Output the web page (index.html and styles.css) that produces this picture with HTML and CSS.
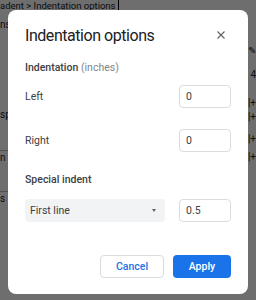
FILE: index.html
```html
<!DOCTYPE html>
<html lang="en">
    <head>
        <meta charset="utf-8" />
        <title>Indentation options</title>
        <link rel="stylesheet" href="styles.css">
    </head>

    <body>
        <div class="page">
            <div class="crumb">adent &gt; Indentation options<span class="caret"></span></div>
            <div class="sides">
                <div class="side left">
                    <div class="frag" style="height: 12px">ns</div>
                    <div class="frag gap" style="height: 78px"></div>
                    <div class="frag">sp</div>
                    <div class="frag rule" style="height: 28px"></div>
                    <div class="frag">n</div>
                    <div class="frag rule" style="height: 26px"></div>
                    <div class="frag">s</div>
                </div>
                <div class="side right">
                    <div class="frag" style="height: 26px"></div>
                    <div class="frag">&#9998;</div>
                    <div class="frag" style="height: 10px"></div>
                    <div class="frag">4</div>
                    <div class="frag" style="height: 14px"></div>
                    <div class="frag">|+</div>
                    <div class="frag">|+</div>
                    <div class="frag" style="height: 8px"></div>
                    <div class="frag">|+</div>
                    <div class="frag" style="height: 4px"></div>
                    <div class="frag">|+</div>
                </div>
            </div>
        </div>

        <div class="scrim">
            <div class="dialog">
                <div class="head">
                    <h2>Indentation options</h2>
                    <svg class="close" width="10" height="10" viewBox="0 0 10 10">
                        <path d="M1.5 1.5 L8.5 8.5 M8.5 1.5 L1.5 8.5" stroke="#5f6368" stroke-width="1.1" fill="none"/>
                    </svg>
                </div>

                <div class="section">Indentation <span class="unit">(inches)</span></div>

                <div class="row first">
                    <label for="left">Left</label>
                    <input class="num" id="left" type="text" value="0"/>
                </div>
                <div class="row">
                    <label for="right">Right</label>
                    <input class="num" id="right" type="text" value="0"/>
                </div>

                <div class="section special">Special indent</div>

                <div class="row pick">
                    <div class="select">
                        <span>First line</span>
                        <span class="arrow"></span>
                    </div>
                    <input class="num" id="special" type="text" value="0.5"/>
                </div>

                <div class="buttons">
                    <button class="btn cancel">Cancel</button>
                    <button class="btn apply">Apply</button>
                </div>
            </div>
        </div>
    </body>
</html>
```

FILE: styles.css
```css
body {
    margin: 0;
    width: 256px;
    height: 300px;
    overflow: hidden;
    position: relative;
    font-family: Roboto, Arial, sans-serif;
    background-color: #fff;
}
.page {
    color: #202124;
    font-size: 10px;
}
.crumb {
    height: 14px;
    line-height: 12px;
    font-size: 9.5px;
    display: flex;
    align-items: flex-start;
}
.caret {
    display: inline-block;
    width: 1px;
    height: 13px;
    margin-left: 2px;
    background-color: #000;
}
.sides {
    display: flex;
    justify-content: space-between;
    padding-top: 4px;
}
.side {
    width: 8px;
    display: flex;
    flex-direction: column;
}
.side.right {
    align-items: flex-end;
}
.frag {
    height: 14px;
    line-height: 14px;
    white-space: nowrap;
}
.rule {
    border-bottom: 1px solid #bbb;
}
.scrim {
    position: absolute;
    left: 0;
    right: 0;
    top: 0;
    bottom: 0;
    background-color: rgba(0, 0, 0, 0.57);
    padding: 10px 8px 0 8px;
}
.dialog {
    width: 240px;
    height: 284px;
    box-sizing: border-box;
    background-color: #fff;
    border-radius: 8px;
    padding: 12px 17px 0 17px;
    color: #3c4043;
    font-size: 10.5px;
}
.head {
    height: 26px;
    display: flex;
    justify-content: space-between;
    align-items: center;
}
.head h2 {
    margin: 0;
    font-size: 16px;
    font-weight: 400;
    letter-spacing: -0.45px;
    color: #202124;
}
.close {
    margin-right: 5px;
}
.section {
    margin-top: 12px;
    height: 16px;
    line-height: 16px;
    font-weight: 500;
    color: #3c4043;
}
.unit {
    font-weight: 400;
    color: #80868b;
}
.special {
    margin-top: 20px;
}
.row {
    display: flex;
    justify-content: space-between;
    align-items: center;
    margin-top: 21px;
}
.row.first {
    margin-top: 9px;
}
.row.pick {
    margin-top: 11px;
}
.row label {
    color: #3c4043;
}
.num {
    width: 52px;
    height: 23px;
    box-sizing: border-box;
    border: 1px solid #dadce0;
    border-radius: 4px;
    padding: 0 0 0 6px;
    font-family: Roboto, Arial, sans-serif;
    font-size: 10.5px;
    color: #3c4043;
    outline: none;
}
.select {
    width: 140px;
    height: 23px;
    box-sizing: border-box;
    background-color: #f1f3f4;
    border-radius: 4px;
    padding: 0 9px 0 5px;
    display: flex;
    justify-content: space-between;
    align-items: center;
}
.arrow {
    width: 0;
    height: 0;
    border-left: 2.5px solid transparent;
    border-right: 2.5px solid transparent;
    border-top: 3px solid #5f6368;
}
.buttons {
    margin-top: 33px;
    display: flex;
    justify-content: flex-end;
    gap: 9px;
}
.btn {
    height: 23px;
    border-radius: 4px;
    font-family: Roboto, Arial, sans-serif;
    font-size: 10.5px;
    font-weight: 500;
    padding: 0;
}
.cancel {
    width: 64px;
    border: 1px solid #dadce0;
    background-color: #fff;
    color: #1a73e8;
}
.apply {
    width: 58px;
    border: none;
    background-color: #1a73e8;
    color: #fff;
}
```
